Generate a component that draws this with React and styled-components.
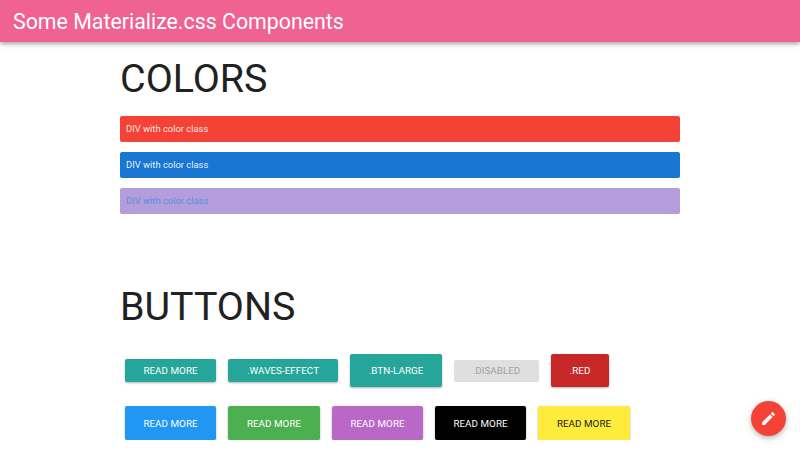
import React from "react";
import styled, { createGlobalStyle } from "styled-components";

const Global = createGlobalStyle`
  html, body { margin: 0; padding: 0; background: #fff; overflow: hidden; }
  body { font-family: Roboto, "Liberation Sans", sans-serif; color: rgba(0,0,0,0.87); }
  * { box-sizing: border-box; }
`;
const Nav = styled.nav`
  height: 42px;
  background: #f06292;
  box-shadow: 0 2px 3px rgba(0,0,0,0.16), 0 2px 6px rgba(0,0,0,0.2);
  display: flex;
  align-items: center;
  padding-left: 13px;
`;
const Brand = styled.div`
  color: #fff;
  font-size: 21.35px;
`;
const Container = styled.main`
  width: 560px;
  margin: 0 auto;
`;
const Heading = styled.h2`
  margin: 0;
  font-weight: 400;
  font-size: 39.4px;
  line-height: 44px;
  height: ${(p) => p.$h}px;
  padding-top: ${(p) => p.$top}px;
  color: #212121;
`;
const Bars = styled.div`
  display: flex;
  flex-direction: column;
  gap: 10px;
  margin-top: 10px;
`;
const Bar = styled.div`
  height: 26px;
  border-radius: 2px;
  background: ${(p) => p.$bg};
  color: ${(p) => p.$fg};
  font-size: 9.4px;
  line-height: 26px;
  padding-left: 6px;
`;
const Rows = styled.div`
  display: flex;
  flex-direction: column;
  gap: 19px;
  padding-left: 5px;
  margin-top: 25px;
`;
const Row = styled.div`
  display: flex;
  align-items: center;
  gap: 12px;
`;
const Btn = styled.div`
  width: ${(p) => p.$w}px;
  height: ${(p) => p.$h || 23}px;
  display: flex;
  align-items: center;
  justify-content: center;
  border-radius: 2px;
  background: ${(p) => p.$bg || "#26a69a"};
  color: ${(p) => p.$fg || "#fff"};
  font-size: 9.8px;
  letter-spacing: 0.05px;
  box-shadow: ${(p) => (p.$flat ? "none" : "0 1px 2px rgba(0,0,0,0.2), 0 1px 3px rgba(0,0,0,0.12)")};
`;
const Fab = styled.div`
  position: fixed;
  left: 751px;
  top: 401px;
  width: 35px;
  height: 35px;
  border-radius: 50%;
  background: #f44336;
  display: flex;
  align-items: center;
  justify-content: center;
  box-shadow: 0 2px 4px rgba(0,0,0,0.18), 0 2px 8px rgba(0,0,0,0.15);
`;

export default function App() {
  return (
    <>
      <Global />
      <Nav>
        <Brand>Some Materialize.css Components</Brand>
      </Nav>
      <Container>
        <Heading $h={64} $top={15}>COLORS</Heading>
        <Bars>
          <Bar $bg="#f44336" $fg="rgba(255,255,255,0.9)">DIV with color class</Bar>
          <Bar $bg="#1976d2" $fg="rgba(255,255,255,0.92)">DIV with color class</Bar>
          <Bar $bg="#b39ddb" $fg="#5c8fe6">DIV with color class</Bar>
        </Bars>
        <Heading $h={115} $top={71}>BUTTONS</Heading>
        <Rows>
          <Row>
            <Btn $w={91}>READ MORE</Btn>
            <Btn $w={110}>.WAVES-EFFECT</Btn>
            <Btn $w={92} $h={33}>.BTN-LARGE</Btn>
            <Btn $w={85} $h={22} $bg="#dfdfdf" $fg="#9f9f9f" $flat>.DISABLED</Btn>
            <Btn $w={58} $h={33} $bg="#c62828">.RED</Btn>
          </Row>
          <Row>
            <Btn $w={91} $h={34} $bg="#2196f3">READ MORE</Btn>
            <Btn $w={92} $h={34} $bg="#4caf50">READ MORE</Btn>
            <Btn $w={91} $h={34} $bg="#ba68c8">READ MORE</Btn>
            <Btn $w={91} $h={34} $bg="#000">READ MORE</Btn>
            <Btn $w={92} $h={34} $bg="#ffeb3b" $fg="#212121">READ MORE</Btn>
          </Row>
        </Rows>
      </Container>
      <Fab>
        <svg width="17" height="17" viewBox="0 0 24 24" fill="#fff">
          <path d="M3 17.25V21h3.75L17.81 9.94l-3.75-3.75L3 17.25zM20.71 7.04a1 1 0 0 0 0-1.41l-2.34-2.34a1 1 0 0 0-1.41 0l-1.83 1.83 3.75 3.75 1.83-1.83z" />
        </svg>
      </Fab>
    </>
  );
}
